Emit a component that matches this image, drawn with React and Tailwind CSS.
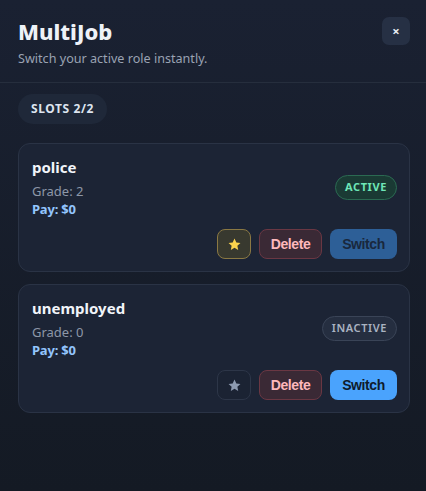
import React from "react";

const jobs = [
  { name: "police", grade: 2, pay: 0, active: true },
  { name: "unemployed", grade: 0, pay: 0, active: false },
];

function Star({ className }) {
  return (
    <svg viewBox="0 0 24 24" className={className} fill="currentColor">
      <path d="M12 2.5l2.9 6.1 6.6.8-4.9 4.6 1.3 6.6L12 17.3l-5.9 3.3 1.3-6.6-4.9-4.6 6.6-.8z" />
    </svg>
  );
}

const btnFont = "[font-family:'Liberation_Sans',Arial,sans-serif] text-[14px] font-bold tracking-[-0.4px]";

function JobCard({ job }) {
  return (
    <div className="rounded-[12px] border border-[#2a3345] bg-[#1c2435] pl-[13px] pr-[12px] pt-[13px] pb-[12px]">
      <div className="flex items-center justify-between">
        <div className="flex flex-col">
          <div className="text-[15px] leading-[20px] font-bold text-[#f1f4f9]">{job.name}</div>
          <div className="mt-[5px] text-[13px] leading-[18px] text-[#8d97a8]">Grade: {job.grade}</div>
          <div className="text-[13px] leading-[18px] font-bold text-[#93c5fd] tracking-[-0.2px]">Pay: ${job.pay}</div>
        </div>
        {job.active ? (
          <div className="h-[25px] flex items-center rounded-full border border-[#2b6a52] bg-[#1a3a34] px-[9px] text-[11px] font-bold tracking-[0.6px] text-[#6ee7b7]">
            ACTIVE
          </div>
        ) : (
          <div className="h-[25px] flex items-center rounded-full border border-[#3a4457] bg-[#252e40] px-[9px] text-[11px] font-semibold tracking-[0.6px] text-[#aab3c2]">
            INACTIVE
          </div>
        )}
      </div>
      <div className="mt-[11px] flex justify-end gap-[8px]">
        {job.active ? (
          <div className="w-[34px] h-[30px] rounded-[8px] border border-[#8a7843] bg-[#38392f] flex items-center justify-center text-[#fcd34d]">
            <Star className="w-[15px] h-[15px]" />
          </div>
        ) : (
          <div className="w-[34px] h-[30px] rounded-[8px] border border-[#2d3648] bg-[#1b2333] flex items-center justify-center text-[#8d9ab0]">
            <Star className="w-[15px] h-[15px]" />
          </div>
        )}
        <div className={"w-[63px] h-[30px] rounded-[8px] border border-[#6a3743] bg-[#3a2935] flex items-center justify-center text-[#fdb8bc] " + btnFont}>
          Delete
        </div>
        {job.active ? (
          <div className={"w-[67px] h-[30px] rounded-[8px] bg-[#2d5f97] flex items-center justify-center text-[#19283d] " + btnFont}>
            Switch
          </div>
        ) : (
          <div className={"w-[67px] h-[30px] rounded-[8px] bg-[#4aa3fd] flex items-center justify-center text-[#0f1b2c] " + btnFont}>
            Switch
          </div>
        )}
      </div>
    </div>
  );
}

export default function App() {
  return (
    <div className="w-[426px] h-[491px] overflow-hidden bg-gradient-to-b from-[#1a2132] to-[#141a24] [font-family:'Noto_Sans',sans-serif]">
      <div className="flex justify-between border-b border-[#262e3d] pl-[18px] pr-[16px] pt-[17px] pb-[14px]">
        <div>
          <div className="text-[22px] leading-[28px] font-extrabold text-[#eef2f8]">MultiJob</div>
          <div className="mt-[5px] text-[12.6px] leading-[18px] text-[#9aa3b3]">Switch your active role instantly.</div>
        </div>
        <div className="w-[28px] h-[28px] rounded-[7px] bg-[#263044] flex items-center justify-center text-[13px] font-bold leading-none text-[#e8ecf3]">
          ×
        </div>
      </div>
      <div className="pl-[18px] pr-[16px] pt-[11px]">
        <div className="inline-flex h-[30px] items-center rounded-full bg-[#1f2839] px-[13px] text-[12px] font-bold tracking-[0.6px] text-[#dde4ef]">
          SLOTS 2/2
        </div>
        <div className="mt-[19px] flex flex-col gap-[12px]">
          {jobs.map((j) => (
            <JobCard key={j.name} job={j} />
          ))}
        </div>
      </div>
    </div>
  );
}
